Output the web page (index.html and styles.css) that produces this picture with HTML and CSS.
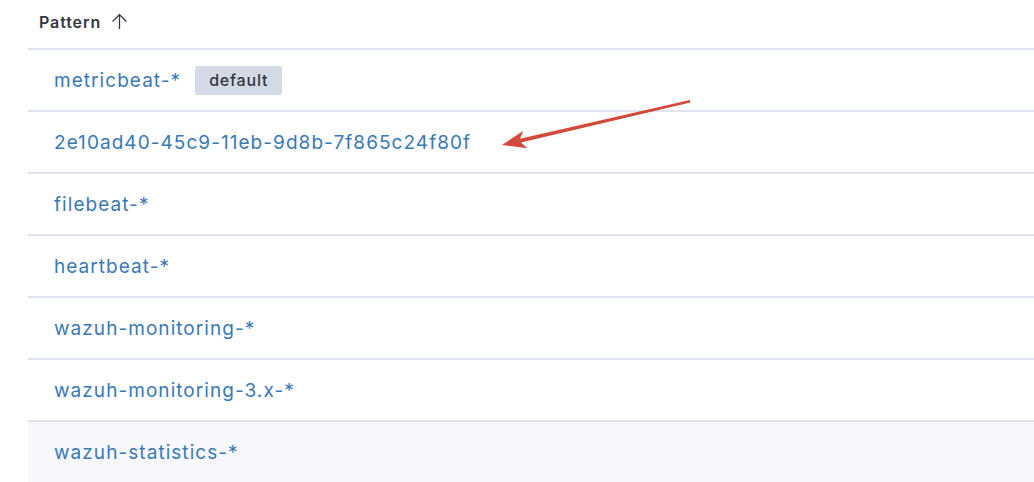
FILE: index.html
```html
<!DOCTYPE html>
<html>
<head>
<meta charset="utf-8">
<link rel="stylesheet" href="styles.css">
</head>
<body>
<div class="table">
  <div class="head">
    <span class="head-title">Pattern</span>
    <svg class="sort-icon" width="17" height="17" viewBox="0 0 16 16"><path d="M8 1.5V15M1.5 8L8 1.5L14.5 8" fill="none" stroke="#343741" stroke-width="1.2"/></svg>
  </div>
  <div class="row"><a class="link">metricbeat-*</a><span class="badge">default</span></div>
  <div class="row"><a class="link">2e10ad40-45c9-11eb-9d8b-7f865c24f80f</a></div>
  <div class="row"><a class="link">filebeat-*</a></div>
  <div class="row"><a class="link">heartbeat-*</a></div>
  <div class="row"><a class="link">wazuh-monitoring-*</a></div>
  <div class="row"><a class="link">wazuh-monitoring-3.x-*</a></div>
  <div class="row row-hover"><a class="link">wazuh-statistics-*</a></div>
</div>
<svg class="annotation" width="1034" height="482" viewBox="0 0 1034 482">
  <polygon points="502,145 523.4,130.7 520,138.7 689.8,100 690.4,102.4 521,142.6 527.4,148.3" fill="#d24a3b"/>
</svg>
</body>
</html>
```

FILE: styles.css
```css
html, body {
  margin: 0;
  padding: 0;
  background: #ffffff;
  overflow: hidden;
}
body {
  width: 1034px;
  height: 482px;
  font-family: Inter, "Noto Sans", sans-serif;
}
.table {
  margin-left: 28px;
  display: flex;
  flex-direction: column;
}
.head {
  height: 50px;
  box-sizing: border-box;
  padding: 0 0 4px 11px;
  display: flex;
  align-items: center;
  gap: 10px;
  border-bottom: 2px solid #dfe4ee;
}
.head-title {
  font-size: 16px;
  font-weight: 600;
  letter-spacing: 0.9px;
  color: #343741;
}
.sort-icon {
  display: block;
  margin-top: -1px;
}
.row {
  height: 62px;
  box-sizing: border-box;
  padding-left: 26px;
  display: flex;
  align-items: center;
  gap: 14px;
  border-bottom: 2px solid #dfe4ee;
}
.row-hover {
  background: #f7f8fb;
}
.link {
  font-size: 19px;
  letter-spacing: 1.05px;
  color: #3a78b6;
  text-decoration: none;
}
.badge {
  display: inline-flex;
  align-items: center;
  height: 29px;
  padding: 0 14px;
  background: #d3dae6;
  border-radius: 3px;
  font-size: 16px;
  font-weight: 500;
  letter-spacing: 0.8px;
  color: #343741;
}
.annotation {
  position: absolute;
  left: 0;
  top: 0;
  pointer-events: none;
}
```
